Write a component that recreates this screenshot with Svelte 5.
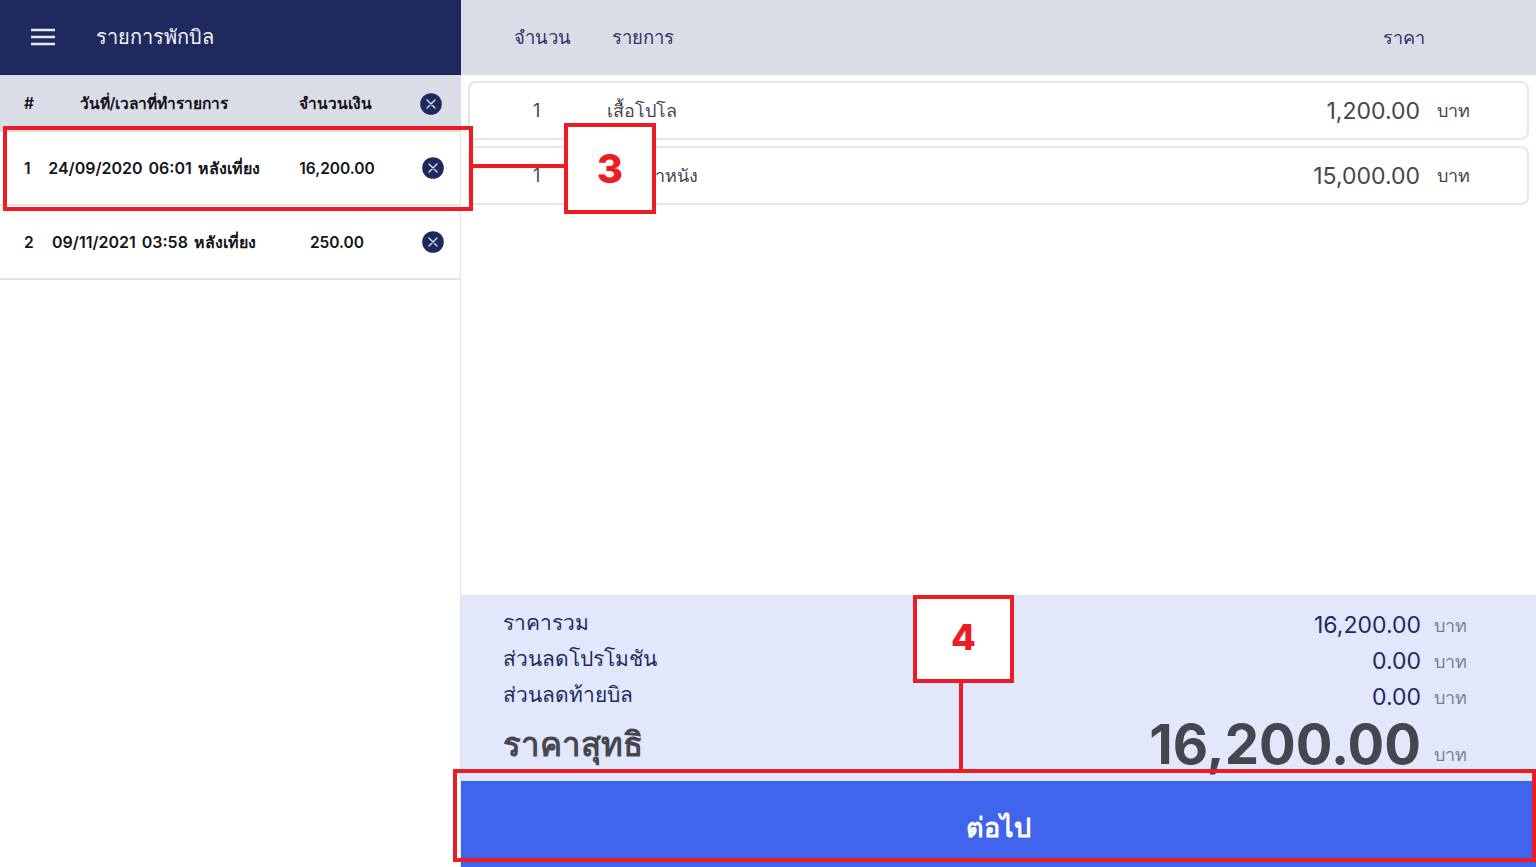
<script>
  const bills = [
    { no: 1, date: "24/09/2020 06:01 หลังเที่ยง", total: "16,200.00" },
    { no: 2, date: "09/11/2021 03:58 หลังเที่ยง", total: "250.00" },
  ];
  const items = [
    { qty: 1, name: "เสื้อโปโล", price: "1,200.00" },
    { qty: 1, name: "รองเท้าหนัง", price: "15,000.00" },
  ];
  const totals = [
    { label: "ราคารวม", value: "16,200.00" },
    { label: "ส่วนลดโปรโมชัน", value: "0.00" },
    { label: "ส่วนลดท้ายบิล", value: "0.00" },
  ];
</script>

{#snippet closeIcon()}
  <svg class="close" viewBox="0 0 22 22" width="22" height="22">
    <circle cx="11" cy="11" r="10.8" fill="#1e2a5e" />
    <path d="M7 7l8 8M15 7l-8 8" stroke="#e8ebf5" stroke-width="1.2" stroke-linecap="round" />
  </svg>
{/snippet}

<div class="page">
  <aside class="sidebar">
    <header class="topbar">
      <svg class="menu" viewBox="0 0 24 18" width="24" height="18">
        <path d="M0 2h24M0 9h24M0 16h24" stroke="#e6e9f2" stroke-width="2.4" />
      </svg>
      <span>รายการพักบิล</span>
    </header>
    <div class="bill-head">
      <span class="no">#</span>
      <span class="date">วันที่/เวลาที่ทำรายการ</span>
      <span class="total">จำนวนเงิน</span>
      {@render closeIcon()}
    </div>
    {#each bills as bill}
      <div class="bill-row">
        <span class="no">{bill.no}</span>
        <span class="date">{bill.date}</span>
        <span class="total">{bill.total}</span>
        {@render closeIcon()}
      </div>
    {/each}
  </aside>

  <main class="detail">
    <header class="detail-head">
      <span class="qty-col">จำนวน</span>
      <span class="name-col">รายการ</span>
      <span class="price-col">ราคา</span>
    </header>
    <div class="items">
      {#each items as item}
        <div class="item">
          <span class="qty">{item.qty}</span>
          <span class="name">{item.name}</span>
          <span class="price">{item.price}</span>
          <span class="unit">บาท</span>
        </div>
      {/each}
    </div>
    <section class="summary">
      {#each totals as row}
        <div class="sum-row">
          <span class="sum-label">{row.label}</span>
          <span class="sum-value">{row.value}</span>
          <span class="sum-unit">บาท</span>
        </div>
      {/each}
      <div class="sum-row grand">
        <span class="sum-label">ราคาสุทธิ</span>
        <span class="sum-value">16,200.00</span>
        <span class="sum-unit">บาท</span>
      </div>
    </section>
    <button class="next">ต่อไป</button>
  </main>

  <div class="mark mark-row"></div>
  <div class="mark line-h"></div>
  <div class="mark badge badge-3">3</div>
  <div class="mark mark-btn"></div>
  <div class="mark line-v"></div>
  <div class="mark badge badge-4">4</div>
</div>

<style>
  :global(body) {
    margin: 0;
    background: #fff;
  }

  .page {
    position: relative;
    display: flex;
    width: 1536px;
    height: 867px;
    overflow: hidden;
    font-family: "Inter", "Noto Sans", "DejaVu Sans", sans-serif;
    color: #45464e;
  }

  .sidebar {
    width: 461px;
    flex: none;
    box-sizing: border-box;
    border-right: 1px solid #e2e4ea;
  }

  .topbar {
    height: 75px;
    margin-right: -1px;
    display: flex;
    align-items: center;
    gap: 41px;
    padding: 0 0 2px 31px;
    box-sizing: border-box;
    background: #1e2a5e;
    color: #f2f4fa;
    font-size: 20px;
  }

  .bill-head,
  .bill-row {
    display: grid;
    grid-template-columns: 48px 212px 154px 30px;
    align-items: center;
    justify-items: center;
    font-size: 15.5px;
    font-weight: 600;
    color: #14151a;
  }

  .bill-head {
    height: 57px;
    background: #dadde6;
    margin-right: -1px;
  }

  .bill-head .total {
    margin-right: 4px;
  }

  .bill-head .close {
    margin-right: 2px;
  }

  .bill-row {
    height: 72px;
    border-bottom: 2px solid #e2e4ea;
  }

  .bill-row .date {
    font-size: 16px;
    word-spacing: 2px;
  }

  .close {
    justify-self: end;
  }

  .no {
    justify-self: start;
    margin-left: 24px;
  }

  .date {
    white-space: nowrap;
  }

  .detail {
    flex: 1;
    display: flex;
    flex-direction: column;
    min-width: 0;
  }

  .detail-head {
    height: 75px;
    flex: none;
    display: flex;
    align-items: center;
    background: #dadde6;
    color: #2a3468;
    font-size: 18.5px;
  }

  .qty-col {
    margin-left: 53px;
    width: 98px;
  }

  .price-col {
    margin-left: auto;
    margin-right: 111px;
    font-size: 18px;
  }

  .items {
    flex: 1;
    display: flex;
    flex-direction: column;
    gap: 6px;
    padding: 6px 7px 0;
  }

  .item {
    height: 59px;
    box-sizing: border-box;
    display: flex;
    align-items: center;
    border: 2px solid #e4e6ee;
    border-radius: 8px;
    font-size: 18px;
  }

  .qty {
    width: 137px;
    padding-left: 63px;
    box-sizing: border-box;
  }

  .price {
    margin-left: auto;
    font-size: 23px;
  }

  .unit {
    width: 107px;
    box-sizing: border-box;
    padding-left: 17px;
    font-size: 18px;
  }

  .summary {
    height: 186px;
    flex: none;
    box-sizing: border-box;
    padding: 11px 0 0 42px;
    background: #e2e8fc;
    color: #1e2a5e;
  }

  .sum-row {
    height: 36px;
    display: flex;
    align-items: center;
    font-size: 21px;
  }

  .sum-label {
    padding-bottom: 3px;
  }

  .sum-value {
    margin-left: auto;
    padding-top: 1px;
    font-size: 23px;
  }

  .sum-unit {
    width: 115px;
    box-sizing: border-box;
    padding: 2px 0 0 13px;
    font-size: 18px;
    color: #7c7f89;
  }

  .grand {
    height: 60px;
    color: #45464e;
    font-weight: 700;
  }

  .grand .sum-label {
    padding-bottom: 0;
    font-size: 33px;
  }

  .grand .sum-value {
    padding-top: 0;
    font-size: 54.5px;
    line-height: 60px;
  }

  .grand .sum-unit {
    font-weight: 400;
    align-self: flex-end;
    margin-bottom: 5px;
    color: #7c7f89;
  }

  .next {
    height: 86px;
    flex: none;
    border: 0;
    background: #4065ec;
    color: #fff;
    font: 600 27px "Inter", "Noto Sans", sans-serif;
    padding-top: 7px;
  }

  .mark {
    position: absolute;
    box-sizing: border-box;
  }

  .mark-row {
    left: 3px;
    top: 126px;
    width: 470px;
    height: 85px;
    border: 4px solid #ed1c24;
  }

  .line-h {
    left: 473px;
    top: 164px;
    width: 92px;
    height: 4px;
    background: #ed1c24;
  }

  .badge {
    display: flex;
    align-items: center;
    justify-content: center;
    background: #fff;
    border: 4px solid #ed1c24;
    color: #ed1c24;
    font: 800 40px "Inter", "Liberation Sans", sans-serif;
  }

  .badge-3 {
    left: 564px;
    top: 123px;
    width: 92px;
    height: 91px;
  }

  .mark-btn {
    left: 453px;
    top: 769px;
    width: 1083px;
    height: 93px;
    border: 4px solid #ed1c24;
  }

  .line-v {
    left: 959px;
    top: 682px;
    width: 4px;
    height: 88px;
    background: #ed1c24;
  }

  .badge-4 {
    left: 913px;
    top: 595px;
    width: 101px;
    height: 88px;
    padding-bottom: 4px;
    font-size: 36px;
  }
</style>
